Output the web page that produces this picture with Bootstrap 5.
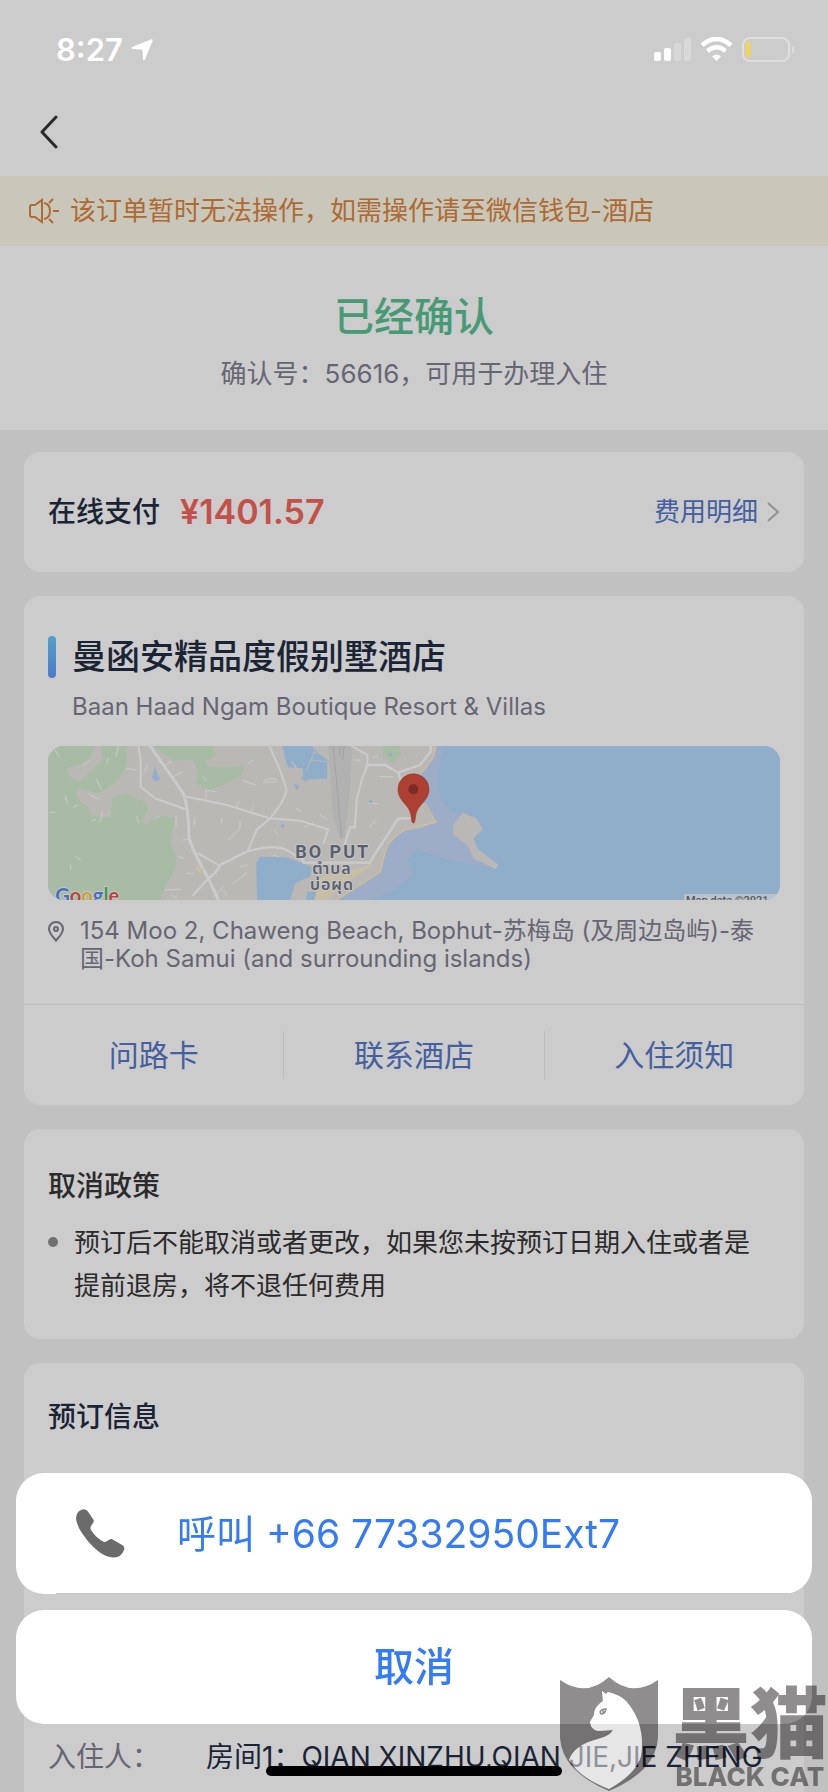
<!DOCTYPE html>
<html lang="zh-CN">
<head>
<meta charset="utf-8">
<meta name="viewport" content="width=device-width, initial-scale=1">
<title>订单详情</title>
<link rel="stylesheet" href="https://cdn.jsdelivr.net/npm/bootstrap@5.3.0/dist/css/bootstrap.min.css">
<style>
  :root { --ink: #1b2435; --muted: #666672; --link: #455f9f; --sheet-blue: #347bf7; }
  body { font-family: Inter, "Noto Sans CJK SC", sans-serif; font-size: 26px; line-height: 36px; background: #c1c1c1; color: var(--ink); }
  svg { display: block; flex: none; }
  .surface { background: #ccc; }
  .bar-row { height: 88px; }
  .status-row { padding-top: 12px; }
  .clock { font-size: 31px; font-weight: 600; color: #fff; }
  .notice { background: #c9c7b9; color: #ae6a34; height: 70px; padding: 0 28px; gap: 10px; }
  .confirm { padding: 42px 24px 38px; }
  .confirm h1 { font-size: 40px; line-height: 58px; font-weight: 500; color: #489a77; margin-bottom: 10px; }
  .muted { color: var(--muted); }
  .stack { padding: 22px 24px 0; gap: 24px; }
  .panel { background: #ccc; border-radius: 16px; padding: 0 24px; }
  .pay { height: 120px; }
  .panel-title { font-size: 28px; line-height: 40px; font-weight: 500; margin: 0; }
  .price { font-size: 34px; font-weight: 600; color: #c4504a; }
  .plain-link, .plain-link:hover { color: var(--link); text-decoration: none; }
  .hotel { padding-top: 40px; }
  .accent { width: 8px; border-radius: 4px; background: linear-gradient(#52a1c9, #4d7acb); }
  .hotel h2 { font-size: 34px; line-height: 42px; font-weight: 500; margin: 0; }
  .small-line { font-size: 24px; line-height: 30px; margin-top: 14px; }
  .map-box { height: 154px; border-radius: 16px; margin-top: 24px; background: #90adca; }
  .address { font-size: 24px; line-height: 28px; padding: 17px 0 31px; gap: 16px; }
  .actions { margin: 0 -24px; border-top: 1px solid #bbb; height: 101px; font-size: 30px; }
  .actions a { line-height: 48px; }
  .actions a + a { border-left: 1px solid #bbb; }
  .policy { padding: 37px 24px 32px; color: #2b2b2b; }
  .policy ul { margin: 15px 0 0; padding: 0 16px 0 0; line-height: 43px; gap: 16px; }
  .dot { width: 10px; height: 10px; border-radius: 50%; background: #707070; flex: none; margin-top: 16px; }
  .booking { padding-top: 34px; padding-bottom: 16px; border-radius: 16px 16px 0 0; }
  .guest { font-size: 28px; line-height: 38px; }
  .guest dt { width: 158px; font-weight: 400; }
  .sheet { padding: 0 16px 68px; gap: 16px; }
  .sheet button { background: #fff; border: 0; border-radius: 28px; color: var(--sheet-blue); font-size: 40px; }
  .sheet .call { height: 121px; padding: 0 60px; gap: 52px; background: linear-gradient(#c6c6c6, #c6c6c6) 40px 100% / 100% 1px no-repeat #fff; }
  .call span { font-size: 39px; }
  .cancel { height: 114px; font-weight: 500; }
  .home { width: 296px; height: 10px; border-radius: 5px; background: #000; bottom: 16px; z-index: 1040; }
  .stamp { color: rgba(8, 2, 4, .45); right: 0; bottom: 0; gap: 14px; pointer-events: none; z-index: 1050; }
  .stamp-cn { font-size: 78px; line-height: 74px; font-weight: 900; }
  .stamp-en { font-size: 26px; line-height: 30px; font-weight: 800; }
</style>
</head>
<body>
<div class="d-flex flex-column min-vh-100">
  <header class="surface">
    <div class="bar-row status-row d-flex align-items-center justify-content-between ps-5 pe-4">
      <div class="d-flex align-items-center gap-2 ps-2">
        <span class="clock">8:27</span>
        <svg width="22" height="22" viewBox="0 0 22 22" fill="#fff"><path d="M20 .4Q22 0 21.500 2L14 20.500Q12.500 22 12 20L11.500 11.500Q11.400 10.500 10.500 10.500L1.500 10Q-.5 9.300 1 8Z"/></svg>
      </div>
      <div class="d-flex align-items-center pe-2">
        <svg width="138" height="26" viewBox="0 0 138 26">
          <g fill="#fff"><rect x="0" y="15" width="7" height="9" rx="2"/><rect x="10" y="11" width="7" height="13" rx="2"/></g>
          <g fill="#d8d8d8"><rect x="20" y="6" width="7" height="18" rx="2"/><rect x="30" y="1" width="7" height="23" rx="2"/></g>
          <g transform="translate(-2 0)"><g fill="none" stroke="#fff" stroke-width="4.500"><path d="M50 8.300Q64.500-4.500 79 8.300"/><path d="M55.500 14Q64.500 6.500 73.500 14"/></g>
          <path d="M60 19.500Q64.500 15.500 69 19.500L64.500 24Z" fill="#fff"/></g>
          <rect x="89" y="1" width="46" height="23" rx="7" fill="none" stroke="#dedede" stroke-width="2"/>
          <rect x="92" y="5" width="4" height="15" rx="1" fill="#f8d548"/>
        </svg>
        <svg width="4" height="8" viewBox="0 0 4 8"><path d="M0 0Q5 4 0 8Z" fill="#dedede"/></svg>
      </div>
    </div>
    <div class="bar-row d-flex align-items-center px-4">
      <a href="#" aria-label="返回" class="ps-3"><svg width="18" height="34" viewBox="0 0 18 34"><path d="M16 2L2 17L16 32" fill="none" stroke="#2a2a2a" stroke-width="3" stroke-linecap="round" stroke-linejoin="round"/></svg></a>
    </div>
    <div class="notice d-flex align-items-center">
      <svg width="32" height="26" viewBox="0 0 32 26" fill="none" stroke="#ae6a34" stroke-width="2"><path d="M14 2V24L7 19H4Q2 19 2 17V9Q2 7 4 7H7ZM16 5Q22 6 22 13Q22 20 16 21M21 5L25 1M25 13H31M21 21L25 25"/></svg>
      <span>该订单暂时无法操作，如需操作请至微信钱包-酒店</span>
    </div>
    <div class="confirm text-center">
      <h1>已经确认</h1>
      <div class="muted">确认号：56616，可用于办理入住</div>
    </div>
  </header>

  <main class="stack d-flex flex-column flex-grow-1">
    <section class="panel pay d-flex align-items-center">
      <h2 class="panel-title">在线支付</h2>
      <span class="price ms-3 ps-1">¥1401.57</span>
      <a href="#" class="plain-link ms-auto d-flex align-items-center gap-2">费用明细
        <svg width="14" height="22" viewBox="0 0 14 22"><path d="M2 2L12 11L2 20" fill="none" stroke="#929292" stroke-width="2"/></svg></a>
    </section>

    <section class="panel hotel">
      <div class="d-flex gap-3"><span class="accent"></span><h2>曼函安精品度假别墅酒店</h2></div>
      <div class="small-line muted ps-4">Baan Haad Ngam Boutique Resort &amp; Villas</div>
      <div class="map-box overflow-hidden">
        <svg width="100%" height="154" viewBox="24 18 2196 462" preserveAspectRatio="xMidYMid slice">
          <rect x="24" y="18" width="2196" height="462" fill="#90adca"/>
          <path d="M1180 18H1212Q1185 110 1200 170Q1220 215 1262 222L1300 330L1375 382Q1240 375 1130 325L1100 360L1120 395Q1100 440 990 480H860L1000 300Z" fill="#9dadc8"/>
          <path d="M24 18H1190L1182 50L1145 100L1130 160L1188 247L1140 265L1080 275L1040 320L1022 395L890 480H24Z" fill="#bab8b4"/>
          <path d="M1186 18L1180 52L1145 98M1155 190L1188 247L1110 262Q1060 285 1042 318Q1030 350 1022 395L890 480" fill="none" stroke="#cdbf96" stroke-width="4"/>
          <path d="M960 385L1010 365L925 425L860 480H825L840 410Z" fill="#c6bfa6"/>
          <path d="M1268 218L1308 235L1329 268L1300 295L1312 325L1375 375L1366 388L1300 355L1282 315L1240 285V255Z" fill="#bab8b4"/>
          <g fill="#a8bba5">
            <path d="M24 18H165L145 65L80 85L90 110L120 125L190 60L185 18H260V75L235 120L175 160L115 145L108 170L145 205L150 225L200 235L215 200L220 170L260 162L318 188L325 215L300 245L320 255L355 225L408 235L395 275L392 310L408 350L405 390L380 430L360 480H24Z"/>
            <path d="M338 18H520L528 45L498 62V80L560 82L612 78L605 105L550 135L510 150L468 132L475 95L460 60L400 62Z"/>
            <path d="M1028 18H1078L1084 45L1060 68L1030 55Z"/>
          </g>
          <g fill="#90adca">
            <path d="M727 18H815L835 38L862 60V115L790 120L788 85L745 82L735 55Z"/><path d="M345 82L360 118L345 125L335 112Z"/><path d="M648 370L660 350L740 352L815 380L810 410L765 430L750 480H652Z"/><path d="M802 455H828L822 480H798ZM762 130L778 138L770 152ZM780 110L804 118L798 126Z"/><path d="M895 68H902L908 132H900ZM904 152H912L914 184H906Z"/><circle cx="1051" cy="45" r="5"/><circle cx="992" cy="185" r="5"/><circle cx="728" cy="258" r="5"/>
          </g>
          <path d="M865 18H938L930 150L915 290L900 300L878 220Z" fill="#b1b1b1"/>
          <path d="M880 18L905 295M900 50V18M912 18L908 60" fill="none" stroke="#a1a2a4" stroke-width="3"/>
          <g fill="none" stroke="#bab8b4" stroke-width="3"><path d="M830 18L800 90M810 60L862 65M818 38L860 42"/></g>
          <g fill="none" stroke="#cbcbcb" stroke-linecap="round" stroke-linejoin="round">
            <path stroke-width="9" d="M330 18L430 160Q445 200 447 290Q455 330 505 415L535 480"/>
            <path stroke-width="7" d="M505 415Q530 400 540 375L620 335Q700 310 740 330L790 362M790 368H990L1000 350L1075 235H1110M985 75H1035L1075 98L1140 75L1172 35V18M1075 98L1085 130"/>
            <path stroke-width="6" d="M440 170L560 195L690 235L780 242L865 268L850 310M295 18L302 60V140L345 175L435 207M688 18L720 90L740 150Q730 190 690 235L650 270L625 328M475 340L535 375M505 415L460 465M935 18L982 45V75L965 120L950 180L945 262H930L915 310"/>
            <path stroke-width="3" d="M45 30L58 50M128 75L150 60M170 118L182 145M150 165L178 178M75 168L82 190M30 217H45M115 195L100 202M235 18L228 50M205 55L200 70M260 85L290 90M322 75L315 95M375 75L395 65M400 110L428 95M498 175V150L525 155M610 122L648 135M670 125Q680 112 708 118V125ZM640 60L625 70M155 242L168 238M180 245L188 215M205 230L212 215M290 230L296 248M345 235L360 228M107 350L122 360M92 375V388M408 230V262M428 300L445 298M465 235L462 258M545 235V250M565 300L600 265V245M590 200L595 185M632 215L640 200M705 270L712 282M700 345L715 350M768 205L785 215M840 225L862 238M795 260L820 250M850 265L862 270M960 60H945M1000 50H1012M985 190H1012M1010 240L990 260M1020 110H1060M545 450L560 465M580 430L620 400M600 380L620 375M520 470L550 440M415 350L430 355M440 400L460 402M375 450L420 448M395 465L410 475M770 85L755 65M490 110L500 122"/>
          </g>
          <path d="M468 375L490 388L482 400L468 392Z" fill="#c6bfa6"/>
          <path d="M1120 249C1112 249 1118 225 1105 205C1090 185 1074 172 1074 148A46 46 0 0 1 1167 148C1167 172 1150 185 1135 205C1122 225 1128 249 1120 249Z" fill="#ae4033" stroke="#97372c" stroke-width="2"/><circle cx="1120" cy="148" r="15" fill="#7b2c24"/>
          <g fill="#59606f" stroke="#c7c7c5" stroke-width="6" paint-order="stroke" text-anchor="middle" font-family="Roboto, 'Noto Sans Thai', 'Noto Sans', sans-serif">
            <text x="878" y="353" font-size="54" font-weight="700" letter-spacing="6">BO PUT</text>
            <text x="876" y="403" font-size="48" font-weight="600" letter-spacing="3">ตำบล</text>
            <text x="876" y="451" font-size="48" font-weight="600" letter-spacing="3">บ่อผุด</text>
          </g>
          <text x="46" y="488" font-size="60" font-family="Lato, sans-serif" font-weight="700" stroke="#ccc" stroke-width="5" paint-order="stroke"><tspan fill="#486fbd">G</tspan><tspan fill="#b6463c">o</tspan><tspan fill="#c9a132">o</tspan><tspan fill="#486fbd">g</tspan><tspan fill="#49935a">l</tspan><tspan fill="#b6463c">e</tspan></text>
          <rect x="1932" y="462" width="288" height="18" fill="#bac3cb"/>
          <text x="1938" y="491" font-size="33" fill="#575a5e" font-family="Roboto, sans-serif" font-weight="500">Map data ©2021</text>
        </svg>
      </div>
      <div class="address d-flex muted">
        <svg width="16" height="21" viewBox="0 0 16 21" class="mt-1" fill="none" stroke="#666672" stroke-width="2"><path d="M8 19.500Q1 12 1 8A7 7 0 0 1 15 8Q15 12 8 19.500Z"/><circle cx="8" cy="8" r="2"/></svg>
        <span>154 Moo 2, Chaweng Beach, Bophut-苏梅岛 (及周边岛屿)-泰国-Koh Samui (and surrounding islands)</span>
      </div>
      <nav class="actions d-flex align-items-center text-center">
        <a href="#" class="plain-link col">问路卡</a>
        <a href="#" class="plain-link col">联系酒店</a>
        <a href="#" class="plain-link col">入住须知</a>
      </nav>
    </section>

    <section class="panel policy">
      <h2 class="panel-title">取消政策</h2>
      <ul class="list-unstyled d-flex"><li class="dot" aria-hidden="true"></li><li>预订后不能取消或者更改，如果您未按预订日期入住或者是提前退房，将不退任何费用</li></ul>
    </section>

    <section class="panel booking flex-grow-1 d-flex flex-column">
      <h2 class="panel-title">预订信息</h2>
      <dl class="guest d-flex mt-auto mb-0">
        <dt class="muted flex-shrink-0">入住人：</dt>
        <dd class="mb-0 text-nowrap">房间1：QIAN XINZHU,QIAN JIE,JIE ZHENG</dd>
      </dl>
    </section>
  </main>
</div>

<div class="sheet fixed-bottom d-flex flex-column">
  <button type="button" class="call d-flex align-items-center">
    <svg width="49" height="49" viewBox="0 0 49 49" fill="#6b6b6b"><path d="M5 1Q9-1 11.500 2L17 10Q18.500 12 17 14L15 17Q14 19 15 21Q20 29 28 33Q29.500 33.500 31 32L33.500 30.500Q35.500 29.500 37.500 31L47 36.500Q49 38 48 41Q45 49 37 48.500Q25 48 11 31Q0 17 0 9Q.5 3 5 1Z"/></svg>
    <span>呼叫 +66 77332950Ext7</span>
  </button>
  <button type="button" class="cancel">取消</button>
</div>
<div class="home position-fixed start-50 translate-middle-x"></div>
<div class="stamp position-fixed d-flex align-items-end">
  <svg width="98" height="116" viewBox="0 0 98 116">
    <path fill-rule="evenodd" fill="currentColor" d="M0 4Q26 22 49 1Q72 22 98 4V62Q96 95 49 115Q2 95 0 62ZM42 15L43 25Q34 31 34 39L30 46Q31 54 38 55L53 54Q50 60 38 63Q14 69 9 84Q20 102 49 113Q76 98 81 80Q86 48 66 25Q60 19 48 16L46 18Z"/>
    <path fill="#fff" fill-opacity=".5" d="M42 15L43 25Q34 31 34 39L30 46Q31 54 38 55L53 54Q50 60 38 63Q14 69 9 84Q20 102 49 113Q76 98 81 80Q86 48 66 25Q60 19 48 16L46 18Z"/>
    <path d="M40 36Q41 33 46 33Q45 38 41 38ZM43 34V37" fill="none" stroke="currentColor" stroke-width="1.500"/>
  </svg>
  <div class="d-flex flex-column align-items-center">
    <span class="stamp-cn">黑猫</span>
    <span class="stamp-en">BLACK CAT</span>
  </div>
</div>
<script src="https://cdn.jsdelivr.net/npm/bootstrap@5.3.0/dist/js/bootstrap.bundle.min.js"></script>
</body>
</html>
